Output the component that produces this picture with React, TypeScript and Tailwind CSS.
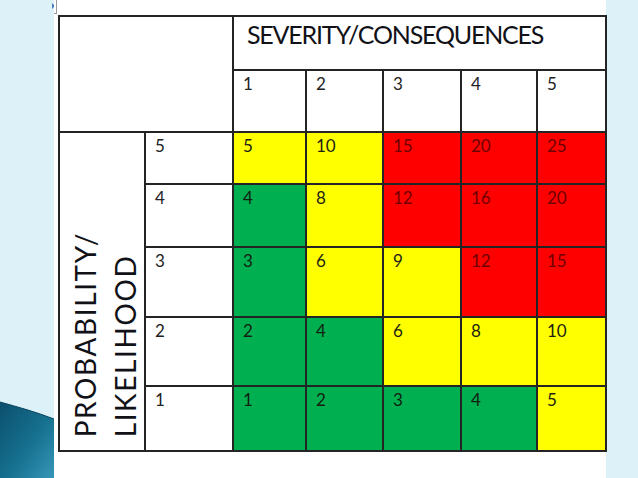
const font = "font-['Lato','Open_Sans',sans-serif]"

const severity = [1, 2, 3, 4, 5]
const likelihood = [5, 4, 3, 2, 1]

function cellColor(value: number) {
  if (value <= 4) return 'bg-[#00b050] text-[#122012]'
  if (value <= 10) return 'bg-[#ffff00] text-[#1e1e14]'
  return 'bg-[#ff0000] text-[#6e0000]'
}

function Swoosh() {
  return (
    <svg width="54" height="78" viewBox="0 0 54 78" className="block">
      <defs>
        <linearGradient id="swoosh" x1="0" y1="0" x2="1" y2="1">
          <stop offset="0" stopColor="#0b4f6d" />
          <stop offset="0.55" stopColor="#16708f" />
          <stop offset="1" stopColor="#3796b8" />
        </linearGradient>
      </defs>
      <path d="M0 2 C 18 7, 36 12, 54 19 L54 78 L0 78 Z" fill="url(#swoosh)" />
      <path d="M0 2 C 18 7, 36 12, 54 19" fill="none" stroke="#0a4560" strokeWidth="1" />
    </svg>
  )
}

export default function App() {
  return (
    <div className={`flex h-[478px] w-[638px] overflow-hidden bg-[#ddf2f8] ${font}`}>
      <div className="flex w-[54px] flex-col justify-between">
        <div className="mt-[3px] ml-[52px] h-0 w-0 border-y-[3px] border-l-[3px] border-y-transparent border-l-[#4b7fc2]" />
        <Swoosh />
      </div>

      <div className="flex w-[552px] flex-col bg-white">
        <div className="flex h-[15px] items-start">
          <div className="h-[14px] w-[3px] border-r border-b border-[#9a9a9a]" />
        </div>

        <div className="ml-[4px] grid w-[549px] grid-cols-[84px_86px_71px_75px_76px_74px_67px] grid-rows-[52px_60px_50px_61px_68px_67px_63px] gap-[2px] border-2 border-[#242424] bg-[#242424]">
          <div className="col-span-2 row-span-2 bg-white" />

          <div className="col-span-5 bg-white pt-[5px] pl-[13px] text-[25px] leading-none tracking-[-1.2px] text-[#111118]">
            SEVERITY/CONSEQUENCES
          </div>

          {severity.map(s => (
            <div key={`s-${s}`} className="bg-white pt-[4px] pl-[9px] text-[17px] leading-none text-[#222]">
              {s}
            </div>
          ))}

          <div className="col-start-1 row-span-5 row-start-3 flex items-end justify-center bg-white pb-[13px] pl-[5px]">
            <div className="rotate-180 text-[28px] leading-[40px] tracking-[1.6px] text-[#111118] [writing-mode:vertical-rl]">
              PROBABILITY/
              <br />
              LIKELIHOOD
            </div>
          </div>

          {likelihood.map(l => (
            <div key={`row-${l}`} className="contents">
              <div className="col-start-2 bg-white pt-[4px] pl-[9px] text-[17px] leading-none text-[#222]">
                {l}
              </div>
              {severity.map(s => {
                const value = l * s
                return (
                  <div
                    key={`c-${l}-${s}`}
                    className={`pt-[4px] pl-[9px] text-[17px] leading-none ${cellColor(value)}`}
                  >
                    {value}
                  </div>
                )
              })}
            </div>
          ))}
        </div>
      </div>
    </div>
  )
}
